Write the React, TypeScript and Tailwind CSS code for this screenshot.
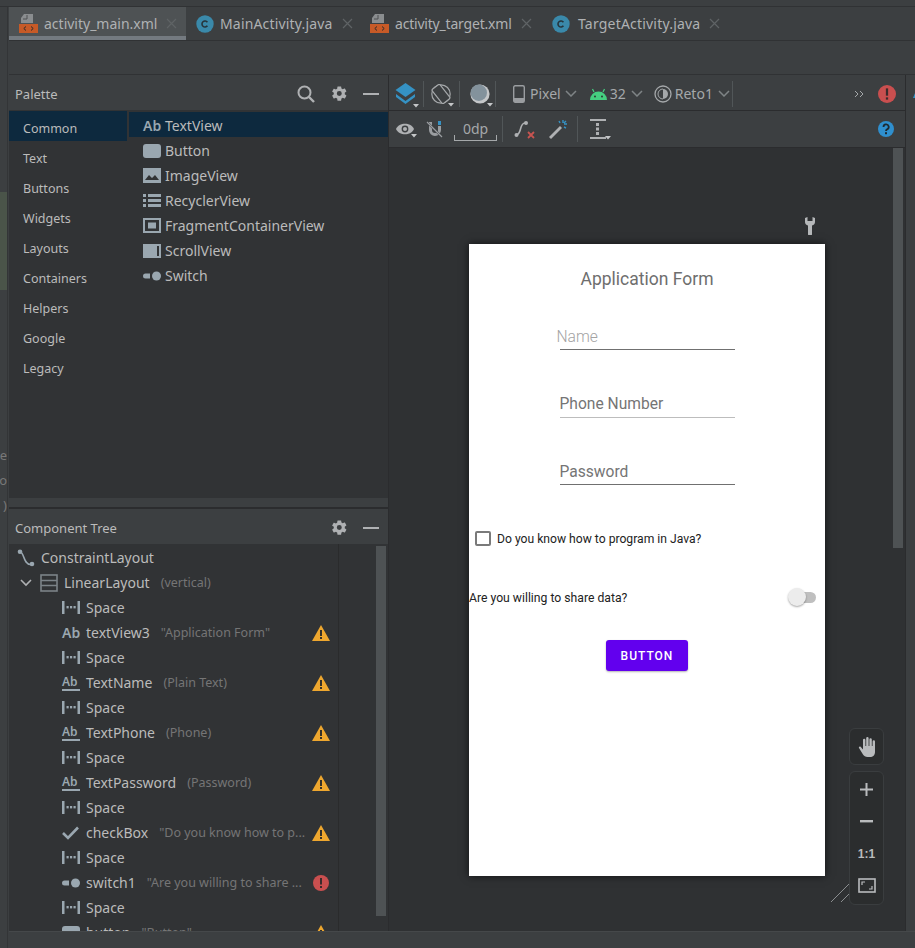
import React from "react";

const Caret = () => (
  <svg className="absolute right-[-4px] bottom-[-3px]" width="8" height="5" viewBox="0 0 8 5"><path d="M1 1h6L4 4.5z" fill="#c4c6c8" /></svg>
);

const XmlIcon = () => (
  <svg width="19" height="19" viewBox="0 0 19 19" className="shrink-0">
    <path d="M5 0h9v9H2V4z" fill="#8a8d8f" />
    <path d="M8 1v4H4" fill="none" stroke="#4e5052" strokeWidth="1" />
    <rect x="0" y="10" width="19" height="9" fill="#c75a27" />
    <path d="M7 12.5l-2.2 2 2.2 2M12 12.5l2.2 2-2.2 2" fill="none" stroke="#2b2b2b" strokeWidth="1" />
  </svg>
);

const ClassIcon = () => (
  <svg width="18" height="18" viewBox="0 0 18 18" className="shrink-0">
    <circle cx="9" cy="9" r="8.7" fill="#3a89aa" />
    <path d="M11.4 7.2a3 3 0 1 0 0 3.6" fill="none" stroke="#26343b" strokeWidth="1.6" />
  </svg>
);

const Close = () => (
  <svg width="11" height="11" viewBox="0 0 11 11" className="shrink-0"><path d="M1 1l9 9M10 1l-9 9" stroke="#5f6365" strokeWidth="1.2" /></svg>
);

const Tab = ({ name, kind, active, w, text }: { name: string; kind: "xml" | "class"; active?: boolean; w: string; text: string }) => (
  <div className={`flex items-center h-full ${w} pl-[10px] ${active ? "bg-[#4e5254] shadow-[inset_0_-4px_0_#747a80]" : ""}`}>
    {kind === "xml" ? <XmlIcon /> : <ClassIcon />}
    <span className={`text-[#afb1b3] whitespace-nowrap ${text}`}>{name}</span>
    <span className="ml-[9px]"><Close /></span>
  </div>
);

const Gear = () => (
  <svg width="17" height="17" viewBox="0 0 24 24"><path fill="#afb1b3" d="M19.4 13c.04-.3.1-.66.1-1s-.06-.7-.1-1l2.2-1.7c.2-.15.25-.43.12-.65l-2.1-3.6c-.13-.22-.4-.3-.63-.22l-2.6 1a7.6 7.6 0 0 0-1.7-1l-.4-2.76A.5.5 0 0 0 13.8 2h-4.2a.5.5 0 0 0-.5.42l-.4 2.76a7.6 7.6 0 0 0-1.7 1l-2.6-1a.5.5 0 0 0-.62.22l-2.1 3.6c-.13.22-.08.5.12.65L4 11c-.04.3-.1.66-.1 1s.06.7.1 1l-2.2 1.7c-.2.15-.25.43-.12.65l2.1 3.6c.13.22.4.3.63.22l2.6-1c.53.4 1.1.74 1.7 1l.4 2.76c.04.24.25.42.5.42h4.2c.25 0 .46-.18.5-.42l.4-2.76a7.6 7.6 0 0 0 1.7-1l2.6 1c.23.08.5 0 .62-.22l2.1-3.6a.5.5 0 0 0-.12-.65zM11.7 15.5a3.5 3.5 0 1 1 0-7 3.5 3.5 0 0 1 0 7z" /></svg>
);

const Minus = () => (
  <svg width="16" height="16" viewBox="0 0 16 16" className="-ml-px"><rect x="0" y="7" width="16" height="2" fill="#afb1b3" /></svg>
);

const PanelHeader = ({ title, search }: { title: string; search?: boolean }) => (
  <div className="h-[35px] shrink-0 bg-[#3c3f41] flex items-center pl-[6px] pr-[9px] pt-[2px]">
    <span className="text-[#bbbbbb] text-[13px] pt-[2px]">{title}</span>
    <div className="ml-auto flex items-center gap-[16px]">
      {search && (
        <svg width="18" height="18" viewBox="0 0 18 18"><circle cx="7.5" cy="7.5" r="6" fill="none" stroke="#afb1b3" strokeWidth="2" /><path d="M12 12l5 5" stroke="#afb1b3" strokeWidth="2.4" /></svg>
      )}
      <Gear />
      <Minus />
    </div>
  </div>
);

const C = "#9aa7b0";

const AbIcon = ({ under }: { under?: boolean }) => (
  <span className={`w-[18px] shrink-0 font-semibold text-[#9aa7b0] ${under ? "border-b-2 border-[#9aa7b0] text-[12px] leading-[13px] pb-[1px]" : "text-[14px] leading-[14px]"}`}>Ab</span>
);
const SpaceIcon = () => (
  <svg width="18" height="13" viewBox="0 0 18 13" className="shrink-0"><rect x="0" y="0" width="2.5" height="13" fill={C} /><rect x="15.5" y="0" width="2.5" height="13" fill={C} /><rect x="4.5" y="5" width="2.2" height="2.4" fill={C} /><rect x="8" y="5" width="2.2" height="2.4" fill={C} /><rect x="11.5" y="5" width="2.2" height="2.4" fill={C} /></svg>
);
const ButtonIcon = () => (
  <svg width="18" height="14" viewBox="0 0 18 14" className="shrink-0"><rect width="18" height="14" rx="3" fill={C} /></svg>
);
const ImageIcon = () => (
  <svg width="18" height="15" viewBox="0 0 18 15" className="shrink-0"><rect width="18" height="15" fill={C} /><path d="M2 12l4-5 3 3 3-3 4 5z" fill="#313335" /></svg>
);
const ListIcon = () => (
  <svg width="18" height="13" viewBox="0 0 18 13" className="shrink-0"><g fill={C}><rect y="0" width="3" height="3" /><rect y="5" width="3" height="3" /><rect y="10" width="3" height="3" /><rect x="5" y="0" width="13" height="3" /><rect x="5" y="5" width="13" height="3" /><rect x="5" y="10" width="13" height="3" /></g></svg>
);
const FragIcon = () => (
  <svg width="18" height="15" viewBox="0 0 18 15" className="shrink-0"><rect x="1" y="1" width="16" height="13" fill="none" stroke={C} strokeWidth="2" /><rect x="5" y="4.5" width="8" height="6" fill={C} /></svg>
);
const ScrollIcon = () => (
  <svg width="18" height="14" viewBox="0 0 18 14" className="shrink-0"><rect width="18" height="14" fill={C} /><rect x="14" y="2" width="2" height="10" fill="#313335" /></svg>
);
const SwitchIcon = () => (
  <svg width="18" height="10" viewBox="0 0 18 10" className="shrink-0"><path d="M7 2.5H2.5a2.5 2.5 0 0 0 0 5H7z" fill={C} /><circle cx="13.5" cy="5" r="4.5" fill={C} /></svg>
);
const CheckIcon = () => (
  <svg width="18" height="14" viewBox="0 0 18 14" className="shrink-0"><path d="M1 7l5 5L16 1.5" fill="none" stroke={C} strokeWidth="2.6" /></svg>
);
const Warn = () => (
  <svg width="18" height="16" viewBox="0 0 18 16" className="shrink-0"><path d="M9 0l9 16H0z" fill="#eea72f" /><rect x="8" y="5" width="2" height="6" fill="#33302a" /><rect x="8" y="12" width="2" height="2" fill="#33302a" /></svg>
);
const Err = ({ s = 16 }: { s?: number }) => (
  <svg width={s} height={s} viewBox="0 0 16 16" className="shrink-0"><circle cx="8" cy="8" r="8" fill="#c94f4f" /><rect x="7" y="3" width="2" height="6.5" fill="#3a2c2c" /><rect x="7" y="11" width="2" height="2" fill="#3a2c2c" /></svg>
);

const categories = ["Common", "Text", "Buttons", "Widgets", "Layouts", "Containers", "Helpers", "Google", "Legacy"];
const widgets: [React.ReactNode, string][] = [
  [<AbIcon />, "TextView"],
  [<ButtonIcon />, "Button"],
  [<ImageIcon />, "ImageView"],
  [<ListIcon />, "RecyclerView"],
  [<FragIcon />, "FragmentContainerView"],
  [<ScrollIcon />, "ScrollView"],
  [<SwitchIcon />, "Switch"],
];

const Palette = () => (
  <div className="h-[388px] shrink-0 bg-[#313335] flex pt-[1px]">
    <div className="w-[118px] flex flex-col">
      {categories.map((c, i) => (
        <div key={c} className={`h-[30px] shrink-0 pl-[14px] pt-[7px] flex items-center text-[12.5px] text-[#bbbbbb] ${i === 0 ? "bg-[#0d293e]" : ""}`}>{c}</div>
      ))}
    </div>
    <div className="ml-[2px] flex-1 flex flex-col pt-[1px]">
      {widgets.map(([icon, name], i) => (
        <div key={name} className={`h-[25px] shrink-0 pl-[14px] pt-[2px] flex items-center gap-[4px] text-[14px] text-[#bbbbbb] ${i === 0 ? "bg-[#0d293e]" : ""}`}>
          {icon}
          <span>{name}</span>
        </div>
      ))}
    </div>
  </div>
);

type Row = { icon: React.ReactNode; name: string; sub?: string; status?: "w" | "e" };
const rows: Row[] = [
  { icon: <SpaceIcon />, name: "Space" },
  { icon: <AbIcon />, name: "textView3", sub: "\"Application Form\"", status: "w" },
  { icon: <SpaceIcon />, name: "Space" },
  { icon: <AbIcon under />, name: "TextName", sub: "(Plain Text)", status: "w" },
  { icon: <SpaceIcon />, name: "Space" },
  { icon: <AbIcon under />, name: "TextPhone", sub: "(Phone)", status: "w" },
  { icon: <SpaceIcon />, name: "Space" },
  { icon: <AbIcon under />, name: "TextPassword", sub: "(Password)", status: "w" },
  { icon: <SpaceIcon />, name: "Space" },
  { icon: <CheckIcon />, name: "checkBox", sub: "\"Do you know how to p...", status: "w" },
  { icon: <SpaceIcon />, name: "Space" },
  { icon: <SwitchIcon />, name: "switch1", sub: "\"Are you willing to share ...", status: "e" },
  { icon: <SpaceIcon />, name: "Space" },
  { icon: <ButtonIcon />, name: "button", sub: "\"Button\"", status: "w" },
];

const Tree = () => (
  <div className="h-[387px] shrink-0 bg-[#313335] flex overflow-hidden">
    <div className="w-[330px] border-r border-[#2a2b2c] pt-[1px] text-[14px] text-[#bbbbbb] overflow-hidden">
      <div className="h-[25px] flex items-center pl-[8px] gap-[5px]">
        <svg width="18" height="18" viewBox="0 0 18 18" className="shrink-0">
          <path d="M2.5 2.5c5 0 3.5 13 11 13" fill="none" stroke={C} strokeWidth="1.6" />
          <circle cx="3" cy="2.8" r="2.3" fill={C} /><circle cx="15" cy="15" r="2.3" fill={C} />
        </svg>
        <span className="ml-px">ConstraintLayout</span>
      </div>
      <div className="h-[25px] flex items-center pl-[11px]">
        <svg width="12" height="8" viewBox="0 0 12 8" className="shrink-0"><path d="M1 1l5 5 5-5" fill="none" stroke="#afb1b3" strokeWidth="1.6" /></svg>
        <svg width="18" height="18" viewBox="0 0 18 18" className="ml-[8px] shrink-0"><rect x="1" y="1" width="16" height="16" fill="none" stroke="#7c8388" strokeWidth="1.6" /><path d="M1 6.5h16M1 11.5h16" stroke="#7c8388" strokeWidth="1.6" /></svg>
        <span className="ml-[6px]">LinearLayout</span>
        <span className="ml-[11px] pt-px text-[12.5px] text-[#757575]">(vertical)</span>
      </div>
      {rows.map((r, i) => (
        <div key={i} className="h-[25px] flex items-center pl-[53px] pr-[8px]">
          {r.icon}
          <span className="ml-[6px]">{r.name}</span>
          {r.sub && <span className="ml-[11px] pt-px text-[12.5px] text-[#757575] whitespace-nowrap">{r.sub}</span>}
          {r.status && <span className="ml-auto flex w-[18px] justify-center">{r.status === "w" ? <Warn /> : <Err />}</span>}
        </div>
      ))}
    </div>
    <div className="flex-1 pl-[37px] pt-[2px]">
      <div className="w-[10px] h-[370px] bg-[#4e5254]" />
    </div>
  </div>
);

const Sep = ({ m }: { m: string }) => <div className={`w-px h-[26px] bg-[#515658] ${m}`} />;
const Chev = ({ c = "#7f8486" }: { c?: string }) => (
  <svg width="12" height="7" viewBox="0 0 12 7" className="shrink-0"><path d="M1 1l5 5 5-5" fill="none" stroke={c} strokeWidth="1.5" /></svg>
);

const ToolbarOne = () => (
  <div className="h-[36px] shrink-0 bg-[#3c3f41] border-b border-[#2b2c2e] flex items-center pl-[6px] pr-[9px] pt-[2px] text-[14px] text-[#a5a8aa]">
    <span className="relative w-[21px] h-[22px]">
      <svg width="21" height="22" viewBox="0 0 21 22"><path d="M10.5 0l10 7-10 7-10-7z" fill="#3592c4" /><path d="M1 11l9.5 7 9.5-7v3l-9.5 7L1 14z" fill="#3592c4" /></svg>
      <Caret />
    </span>
    <Sep m="ml-[7px]" />
    <span className="relative w-[20px] h-[20px] ml-[7px]">
      <svg width="20" height="20" viewBox="0 0 20 20" fill="none" stroke="#a5a8aa" strokeWidth="1.2"><circle cx="10" cy="10" r="9.2" /><rect x="5" y="1" width="10" height="18" rx="1.5" transform="rotate(-38 10 10)" fill="#3c3f41" /></svg>
      <Caret />
    </span>
    <Sep m="ml-[8px]" />
    <span className="relative w-[20px] h-[20px] ml-[10px]">
      <svg width="20" height="20" viewBox="0 0 20 20"><circle cx="10" cy="10" r="9.6" fill="#c5c7c9" /><circle cx="8.8" cy="8.8" r="8.2" fill="#83929c" /></svg>
      <Caret />
    </span>
    <Sep m="ml-[5px]" />
    <svg width="12" height="18" viewBox="0 0 12 18" className="ml-[17px]"><rect x=".7" y=".7" width="10.6" height="16.6" rx="1.5" fill="none" stroke="#9a9da0" strokeWidth="1.4" /><rect x="1" y="13" width="10" height="4" fill="#9a9da0" /></svg>
    <span className="ml-[5px]">Pixel</span>
    <span className="ml-[4px]"><Chev /></span>
    <svg width="17" height="12" viewBox="0 0 17 12" className="ml-[13px]"><path d="M0 12a8.5 8.5 0 0 1 17 0z" fill="#45cf80" /><path d="M4 4L2.5 1M13 4l1.5-3" stroke="#45cf80" strokeWidth="1.2" /><circle cx="5" cy="8.5" r=".9" fill="#2b2b2b" /><circle cx="12" cy="8.5" r=".9" fill="#2b2b2b" /></svg>
    <span className="ml-[3px]">32</span>
    <span className="ml-[5px]"><Chev /></span>
    <svg width="18" height="18" viewBox="0 0 18 18" className="ml-[11px]"><circle cx="9" cy="9" r="8" fill="none" stroke="#a5a8aa" strokeWidth="1.3" /><path d="M9 4a5 5 0 0 1 0 10z" fill="#a5a8aa" /><path d="M9 4a5 5 0 0 0 0 10" fill="none" stroke="#a5a8aa" /></svg>
    <span className="ml-[3px]">Reto1</span>
    <span className="ml-[5px]"><Chev /></span>
    <Sep m="ml-[2px]" />
    <svg width="10" height="8" viewBox="0 0 10 8" className="ml-auto" fill="none" stroke="#a5a8aa" strokeWidth="1"><path d="M1 1l3 3-3 3M6 1l3 3-3 3" /></svg>
    <span className="ml-[14px]"><Err s={18} /></span>
  </div>
);

const ToolbarTwo = () => (
  <div className="h-[37px] shrink-0 bg-[#3c3f41] flex items-center pl-[7px] pr-[11px] border-b border-[#2b2c2e]">
    <span className="relative w-[18px] h-[12px]">
      <svg width="18" height="12" viewBox="0 0 18 12"><path d="M0 6c3-7 15-7 18 0-3 7-15 7-18 0z" fill="#afb1b3" /><circle cx="9" cy="6" r="3.4" fill="#3c3f41" /><circle cx="9" cy="6" r="2" fill="#afb1b3" /></svg>
      <Caret />
    </span>
    <svg width="18" height="18" viewBox="0 0 18 18" className="ml-[12px]"><path d="M3 2v8a6 6 0 0 0 12 0V6h-3v4a3 3 0 0 1-6 0V2z" fill="#9a9da0" /><rect x="12" y="1" width="3" height="4" fill="#3592c4" /><path d="M0 1l16 16" stroke="#3c3f41" strokeWidth="2" /><path d="M1 2l15 15" stroke="#9a9da0" strokeWidth="1.2" /></svg>
    <div className="ml-[10px] w-[43px] relative text-[14px] leading-[16px] text-[#a5a8aa] text-center border-b border-[#a5a8aa] pb-[3px] mt-[3px]">
      0dp
      <span className="absolute left-0 bottom-0 w-px h-[5px] bg-[#a5a8aa]" />
      <span className="absolute right-0 bottom-0 w-px h-[5px] bg-[#a5a8aa]" />
    </div>
    <Sep m="ml-[5px]" />
    <svg width="22" height="20" viewBox="0 0 22 20" className="ml-[11px]"><path d="M2 16c6 0 3-12 9-12" fill="none" stroke="#afb1b3" strokeWidth="1.6" /><circle cx="2.5" cy="16" r="2" fill="#afb1b3" /><circle cx="12" cy="4" r="2" fill="#afb1b3" /><path d="M14 13l6 6M20 13l-6 6" stroke="#c75450" strokeWidth="1.8" /></svg>
    <svg width="20" height="20" viewBox="0 0 20 20" className="ml-[12px]"><path d="M1 18L12 7l2 2L3 20z" fill="#afb1b3" /><path d="M15 1v3M11 2l1 2M19 5h-3M18 9l-2-1M18 2l-2 2" stroke="#3592c4" strokeWidth="1.4" /></svg>
    <Sep m="ml-[9px]" />
    <span className="relative w-[16px] h-[20px] ml-[12px]">
      <svg width="16" height="20" viewBox="0 0 16 20"><rect x="0" y="0" width="16" height="2" fill="#afb1b3" /><rect x="0" y="18" width="16" height="2" fill="#afb1b3" /><rect x="6" y="4" width="3" height="3" fill="#afb1b3" /><rect x="6" y="8.5" width="3" height="3" fill="#afb1b3" /><rect x="6" y="13" width="3" height="3" fill="#afb1b3" /></svg>
      <span className="absolute right-[-6px] bottom-[-1px]"><svg width="8" height="5" viewBox="0 0 8 5"><path d="M1 1h6L4 4.5z" fill="#c4c6c8" /></svg></span>
    </span>
    <svg width="16" height="16" viewBox="0 0 16 16" className="ml-auto"><circle cx="8" cy="8" r="8" fill="#2f8fce" /><path d="M5.5 6a2.6 2.6 0 1 1 3.6 2.4c-.8.4-1.1.8-1.1 1.6" fill="none" stroke="#1d2a33" strokeWidth="1.8" /><rect x="7" y="11.2" width="2" height="2" fill="#1d2a33" /></svg>
  </div>
);

const Field = ({ label, cls, line, pb }: { label: string; cls: string; line: string; pb: string }) => (
  <div className={`w-[175px] h-[38px] mx-auto border-b ${line} flex items-end text-[15.6px] leading-[20px] ${pb} ${cls}`}>
    <span>{label}</span>
  </div>
);

const Device = () => (
  <div className="w-[356px] h-[632px] bg-white shadow-[0_0_8px_rgba(0,0,0,0.65)] flex flex-col font-['Roboto',sans-serif]">
    <div className="h-[68px] pt-[2px] flex items-center justify-center text-[17.5px] text-[#6e6e6e]">Application Form</div>
    <Field label="Name" cls="text-[#a3a3a3] font-light -indent-[3px]" line="border-[#707070]" pb="pb-[2px]" />
    <div className="h-[30px]" />
    <Field label="Phone Number" cls="text-[#757575]" line="border-[#bdbdbd]" pb="pb-[3px]" />
    <div className="h-[29px]" />
    <Field label="Password" cls="text-[#757575]" line="border-[#707070]" pb="pb-[2px]" />
    <div className="mt-[38px] h-[30px] flex items-center pl-[6px] text-[12.15px] text-[#222222]">
      <div className="w-[16px] h-[15px] border-2 border-[#7a7a7a] rounded-[2px] shrink-0" />
      <span className="ml-[6px] pt-[2px]">Do you know how to program in Java?</span>
    </div>
    <div className="mt-[29px] h-[30px] flex items-center text-[12.2px] text-[#222222] pr-[9px]">
      <span className="pt-[2px]">Are you willing to share data?</span>
      <div className="ml-auto w-[28px] h-[18px] flex items-center relative">
        <div className="ml-[9px] w-[19px] h-[11px] rounded-full bg-[#bfbfbf]" />
        <div className="absolute left-0 top-0 w-[18px] h-[18px] rounded-full bg-[#ececec] shadow-[0_1px_2px_rgba(0,0,0,0.35)]" />
      </div>
    </div>
    <div className="mt-[28px] w-[82px] h-[31px] mx-auto rounded-[3px] bg-[#6200ee] text-white text-[12px] font-medium tracking-[1px] flex items-center justify-center shadow-[0_1px_2px_rgba(0,0,0,0.3)]">BUTTON</div>
  </div>
);

const Canvas = () => (
  <div className="relative flex-1 min-h-0 bg-[#2f3133] flex overflow-hidden">
    <div className="flex-1 pl-[80px] pt-[69px]">
      <div className="w-[356px] h-[20px] flex justify-end pr-[10px] mb-[7px]">
        <svg width="10" height="18" viewBox="0 0 10 18"><path d="M0 1v4a3.5 3.5 0 0 0 3 3.4V17a2 2 0 0 0 4 0V8.4A3.5 3.5 0 0 0 10 5V1L7.5 0v4h-5V0z" fill="#b5b7b9" /></svg>
      </div>
      <Device />
    </div>
    <div className="w-[12px] pr-[2px]">
      <div className="h-[400px] bg-[#4e5254]" />
    </div>
    <svg className="absolute left-[441px] top-[733px]" width="22" height="22" viewBox="0 0 22 22" fill="none" stroke="#8a8d8f" strokeWidth="1"><path d="M1 21L20 2M11 21l9-9" /></svg>
    <div className="absolute left-[460px] top-[580px] w-[35px] h-[37px] rounded-[6px] bg-[#2b2d2e] border border-[#3a3d3f] flex items-center justify-center">
      <svg width="18" height="20" viewBox="0 0 18 20"><path d="M1 11l4 6.5c1 1.6 2.4 2.5 4.5 2.5H12c3 0 5-2 5-5V4.5a1.2 1.2 0 0 0-2.4 0V9h-.8V2.5a1.2 1.2 0 0 0-2.4 0V9h-.8V1.2a1.2 1.2 0 0 0-2.4 0V9h-.8V3a1.2 1.2 0 0 0-2.4 0v9.5L2.6 9.8C1.7 9 .4 10 1 11z" fill="#b9bbbd" /></svg>
    </div>
    <div className="absolute left-[460px] top-[623px] w-[35px] h-[134px] rounded-[6px] bg-[#2b2d2e] border border-[#3a3d3f] flex flex-col items-center text-[#b9bbbd]">
      <svg width="13" height="13" viewBox="0 0 13 13" className="mt-[11px] shrink-0"><path d="M0 6.5h13M6.5 0v13" stroke="#b9bbbd" strokeWidth="2" /></svg>
      <svg width="13" height="3" viewBox="0 0 13 3" className="mt-[24px] shrink-0"><rect width="13" height="2.4" fill="#b9bbbd" /></svg>
      <span className="mt-[24px] text-[12px] leading-[14px] font-bold font-['Liberation_Sans',sans-serif]">1:1</span>
      <svg width="18" height="15" viewBox="0 0 18 15" className="mt-[17px] shrink-0"><rect x="1" y="1" width="16" height="13" fill="none" stroke="#b9bbbd" strokeWidth="1.6" /><path d="M4 7V4h3M14 8v3h-3" fill="none" stroke="#b9bbbd" strokeWidth="1.2" /></svg>
    </div>
  </div>
);

export default function App() {
  return (
    <div className="w-[915px] h-[948px] bg-[#3c3f41] overflow-hidden flex flex-col font-['Noto_Sans',sans-serif] text-[14px]">
      <div className="h-[7px] shrink-0 border-b border-[#303234]" />
      <div className="flex flex-1 min-h-0">
        <div className="w-[8px] shrink-0 flex flex-col border-r border-[#333537] text-[13px] text-[#787878] overflow-hidden">
          <div className="h-[185px] shrink-0" />
          <div className="h-[98px] shrink-0 bg-[#4a5449]" />
          <div className="h-[153px] shrink-0" />
          <div className="h-[25px] shrink-0 leading-[25px] flex justify-end whitespace-nowrap">e</div>
          <div className="h-[25px] shrink-0 leading-[25px] flex justify-end whitespace-nowrap">fo</div>
          <div className="h-[25px] shrink-0 leading-[25px] flex justify-end whitespace-nowrap">)</div>
        </div>
        <div className="flex-1 min-w-0 flex flex-col pl-px">
          <div className="h-[34px] shrink-0 flex border-b border-[#303234]">
            <Tab name="activity_main.xml" kind="xml" active w="w-[177px]" text="ml-[6px]" />
            <Tab name="MainActivity.java" kind="class" w="w-[174px]" text="ml-[6px] tracking-[0.17px]" />
            <Tab name="activity_target.xml" kind="xml" w="w-[182px]" text="ml-[6px] -tracking-[0.2px]" />
            <Tab name="TargetActivity.java" kind="class" w="w-[175px]" text="ml-[8px] tracking-[0.2px]" />
          </div>
          <div className="h-[34px] shrink-0 border-b border-[#303234]" />
          <div className="flex flex-1 min-h-0">
            <div className="w-[380px] shrink-0 flex flex-col border-r border-[#2b2c2e]">
              <PanelHeader title="Palette" search />
              <Palette />
              <div className="h-[11px] shrink-0 border-b-2 border-[#2b2c2e]" />
              <PanelHeader title="Component Tree" />
              <Tree />
            </div>
            <div className="flex-1 min-w-0 flex flex-col">
              <ToolbarOne />
              <ToolbarTwo />
              <Canvas />
            </div>
            <div className="w-[10px] shrink-0 border-l border-[#2b2c2e] pt-[18px] pl-[7px]">
              <svg width="2" height="5" viewBox="0 0 2 5"><path d="M0 5L2 0v5z" fill="#3592c4" /></svg>
            </div>
          </div>
          <div className="h-[17px] shrink-0 border-t border-[#45484a]" />
        </div>
      </div>
    </div>
  );
}
